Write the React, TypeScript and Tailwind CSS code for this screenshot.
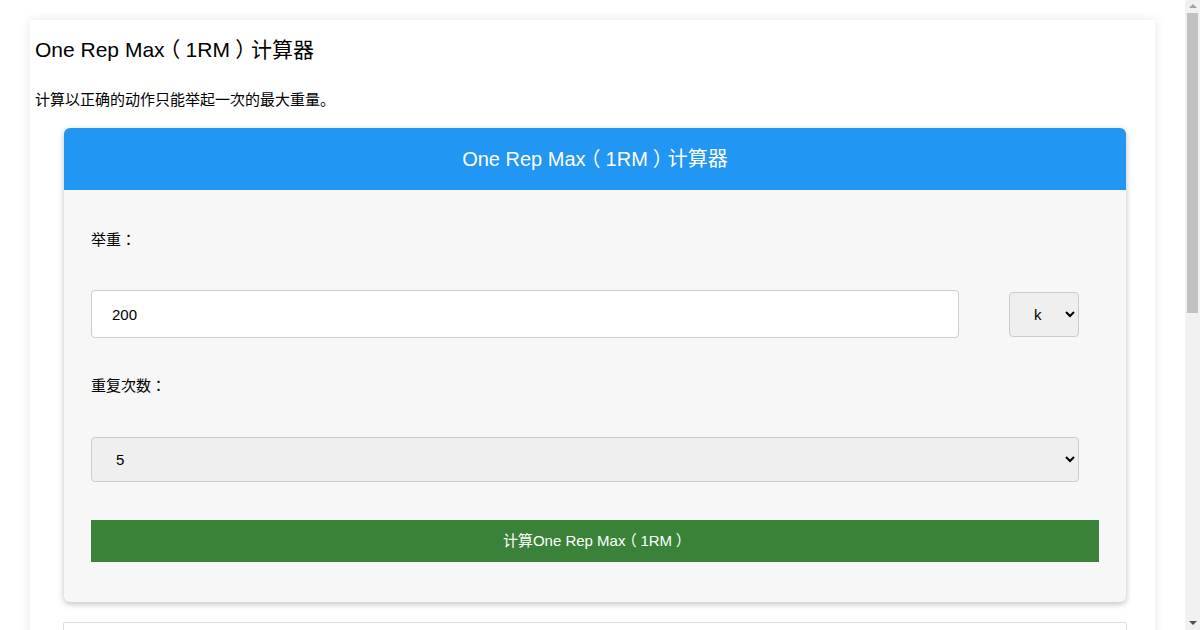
import React from "react";

const font = { fontFamily: '"Liberation Sans", Arial, "Noto Sans CJK KR", sans-serif' };

function Open() {
  return <span className="[font-feature-settings:'halt'] pl-[0.25em] pr-[0.25em]">（</span>;
}
function Close() {
  return <span className="[font-feature-settings:'halt'] pl-[0.25em] pr-[0.25em]">）</span>;
}

function Title() {
  return (
    <>
      One Rep Max<Open />1RM<Close />计算器
    </>
  );
}

function Scrollbar() {
  return (
    <div className="w-[15px] h-full bg-[#f1f1f1] flex flex-col items-center shrink-0">
      <div className="h-[12px] w-full flex items-center justify-center">
        <div className="w-0 h-0 border-l-[4px] border-r-[4px] border-b-[4px] border-l-transparent border-r-transparent border-b-[#a3a3a3]" />
      </div>
      <div className="w-[11px] h-[300px] bg-[#c1c1c1] mt-[1px]" />
      <div className="flex-1" />
      <div className="h-[14px] w-full flex items-center justify-center">
        <div className="w-0 h-0 border-l-[4px] border-r-[4px] border-t-[4px] border-l-transparent border-r-transparent border-t-[#505050]" />
      </div>
    </div>
  );
}

export default function App() {
  return (
    <div className="h-[630px] flex bg-white text-black overflow-hidden" style={font}>
      <div className="flex-1 h-full overflow-hidden">
        <div className="pt-[20px] pb-[30px]">
          <div className="mx-[30px] bg-white shadow-[0_0_10px_rgba(0,0,0,0.1)] pb-[30px]">
            <h1 className="pl-[5px] pt-[17px] text-[21px] leading-[26px] font-normal"><Title /></h1>
            <p className="pl-[5px] mt-[27px] text-[15px] leading-[20px]">计算以正确的动作只能举起一次的最大重量。</p>
            <div className="ml-[34px] mr-[29px] mt-[18px] rounded-[6px] overflow-hidden shadow-[0_2px_6px_rgba(0,0,0,0.25)] bg-[#f7f7f7]">
              <div className="bg-[#2196f3] h-[62px] flex items-center justify-center text-white text-[20px]">
                <span><Title /></span>
              </div>
              <div className="px-[27px] pt-[40px] pb-[40px]">
                <label className="block text-[15px] leading-[20px]">举重：</label>
                <div className="flex items-center mt-[40px]">
                  <input
                    type="text"
                    defaultValue="200"
                    className="w-[868px] h-[48px] bg-white border border-[#ccc] rounded-[4px] pl-[20px] text-[15px] outline-none"
                    style={font}
                  />
                  <select
                    defaultValue="k"
                    className="ml-[50px] w-[70px] h-[45px] bg-[#efefef] border border-[#ccc] rounded-[4px] pl-[20px] text-[15px]"
                    style={font}
                  >
                    <option value="k">k</option>
                    <option value="lb">lb</option>
                  </select>
                </div>
                <label className="block text-[15px] leading-[20px] mt-[38px]">重复次数：</label>
                <select
                  defaultValue="5"
                  className="block mt-[41px] w-[988px] h-[45px] bg-[#efefef] border border-[#ccc] rounded-[4px] pl-[20px] text-[15px]"
                  style={font}
                >
                  {[1, 2, 3, 4, 5, 6, 7, 8, 9, 10].map((n) => (
                    <option key={n} value={String(n)}>{n}</option>
                  ))}
                </select>
                <button
                  className="block mt-[38px] w-full h-[42px] bg-[#3b8239] text-white text-[15px]"
                  style={font}
                >
                  计算One Rep Max<Open />1RM<Close />
                </button>
              </div>
            </div>
            <div className="ml-[33px] mr-[28px] mt-[20px] h-[560px] bg-white border border-[#ddd] rounded-[2px]"></div>
          </div>
        </div>
      </div>
      <Scrollbar />
    </div>
  );
}
